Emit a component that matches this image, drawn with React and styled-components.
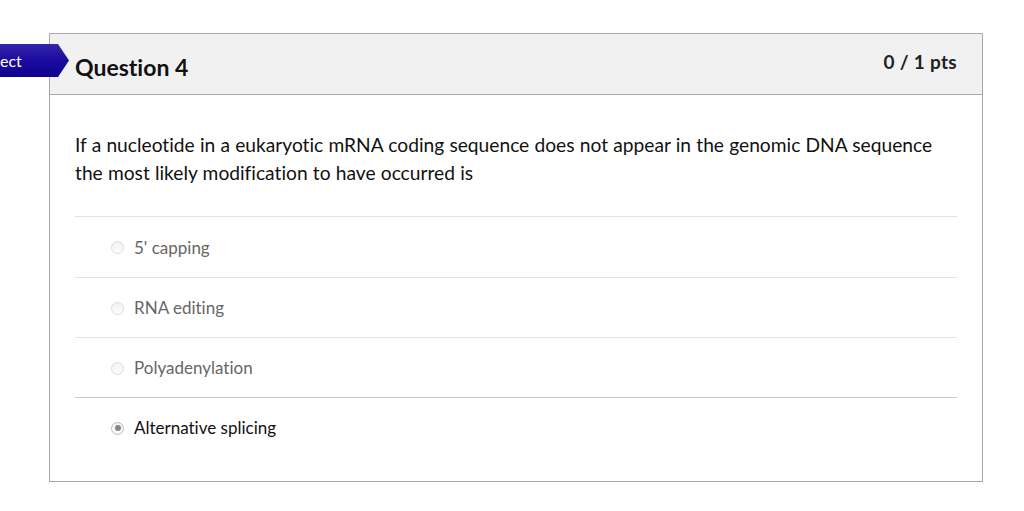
import React from 'react';
import styled, { createGlobalStyle } from 'styled-components';

const GlobalStyle = createGlobalStyle`
  html, body { margin: 0; padding: 0; background: #fff; }
  body {
    font-family: Lato, "Open Sans", sans-serif;
    color: #2d3b45;
    font-variant-ligatures: no-common-ligatures;
  }
`;

const Page = styled.div`
  position: relative;
  padding: 33px 0 0 49px;
  width: 1024px;
  height: 511px;
  box-sizing: border-box;
`;

const Banner = styled.div`
  position: absolute;
  left: 0; top: 44px;
  width: 69px; height: 33px;
  background: linear-gradient(180deg, #3326aa 0%, #1a0aa0 50%, #10008f 100%);
  clip-path: polygon(0 0, 58px 0, 69px 50%, 58px 100%, 0 100%);
  color: #fff;
  font-size: 16px;
  line-height: 33px;
  box-sizing: border-box;
`;

const Card = styled.div`
  width: 934px;
  height: 449px;
  border: 1px solid #a8a8a8;
  box-sizing: border-box;
  display: flex;
  flex-direction: column;
`;

const Header = styled.div`
  height: 60px;
  background: #f1f1f1;
  border-bottom: 1px solid #a9a9a9;
  display: flex;
  justify-content: space-between;
  align-items: flex-start;
  padding: 0 25px;
`;

const Title = styled.h2`
  margin: 18px 0 0;
  font-size: 23px;
  font-weight: 700;
  color: #111;
  line-height: 30px;
`;

const Points = styled.div`
  margin-top: 14px;
  font-size: 19px;
  font-weight: 700;
  color: #222;
  line-height: 28px;
  letter-spacing: 0.3px;
`;

const Body = styled.div`
  padding: 36px 25px 0;
`;

const Prompt = styled.p`
  margin: 0 0 29px;
  font-size: 19.2px;
  line-height: 28px;
  word-spacing: 0.3px;
  color: #111;
`;

const Answer = styled.label`
  display: flex;
  align-items: center;
  gap: 10px;
  height: ${p => (p.first ? 61 : 60)}px;
  border-top: 1px solid ${p => (p.strong ? '#c8c8c8' : '#e3e3e3')};
  padding-left: 36px;
  font-size: 17px;
  color: ${p => (p.selected ? '#111' : '#666')};
  box-sizing: border-box;
`;

const Radio = styled.span`
  width: 13px;
  height: 13px;
  border-radius: 50%;
  border: 1px solid ${p => (p.selected ? '#bdbdbd' : '#dcdcdc')};
  background: linear-gradient(180deg, #f2f2f2, #fdfdfd);
  box-sizing: border-box;
  display: flex;
  align-items: center;
  justify-content: center;
  flex: none;
  margin-top: 1px;
  &::after {
    content: '';
    display: ${p => (p.selected ? 'block' : 'none')};
    width: 6px;
    height: 6px;
    border-radius: 50%;
    background: #888;
  }
`;

const answers = ["5' capping", 'RNA editing', 'Polyadenylation', 'Alternative splicing'];
const chosen = 3;

export default function App() {
  return (
    <Page>
      <GlobalStyle />
      <Banner>ect</Banner>
      <Card>
        <Header>
          <Title>Question 4</Title>
          <Points>0 / 1 pts</Points>
        </Header>
        <Body>
          <Prompt>
            If a nucleotide in a eukaryotic mRNA coding sequence does not appear in the genomic DNA sequence
            <br />
            the most likely modification to have occurred is
          </Prompt>
          {answers.map((a, i) => (
            <Answer key={a} first={i === 0} selected={i === chosen} strong={i === chosen}>
              <Radio selected={i === chosen} />
              {a}
            </Answer>
          ))}
        </Body>
      </Card>
    </Page>
  );
}
